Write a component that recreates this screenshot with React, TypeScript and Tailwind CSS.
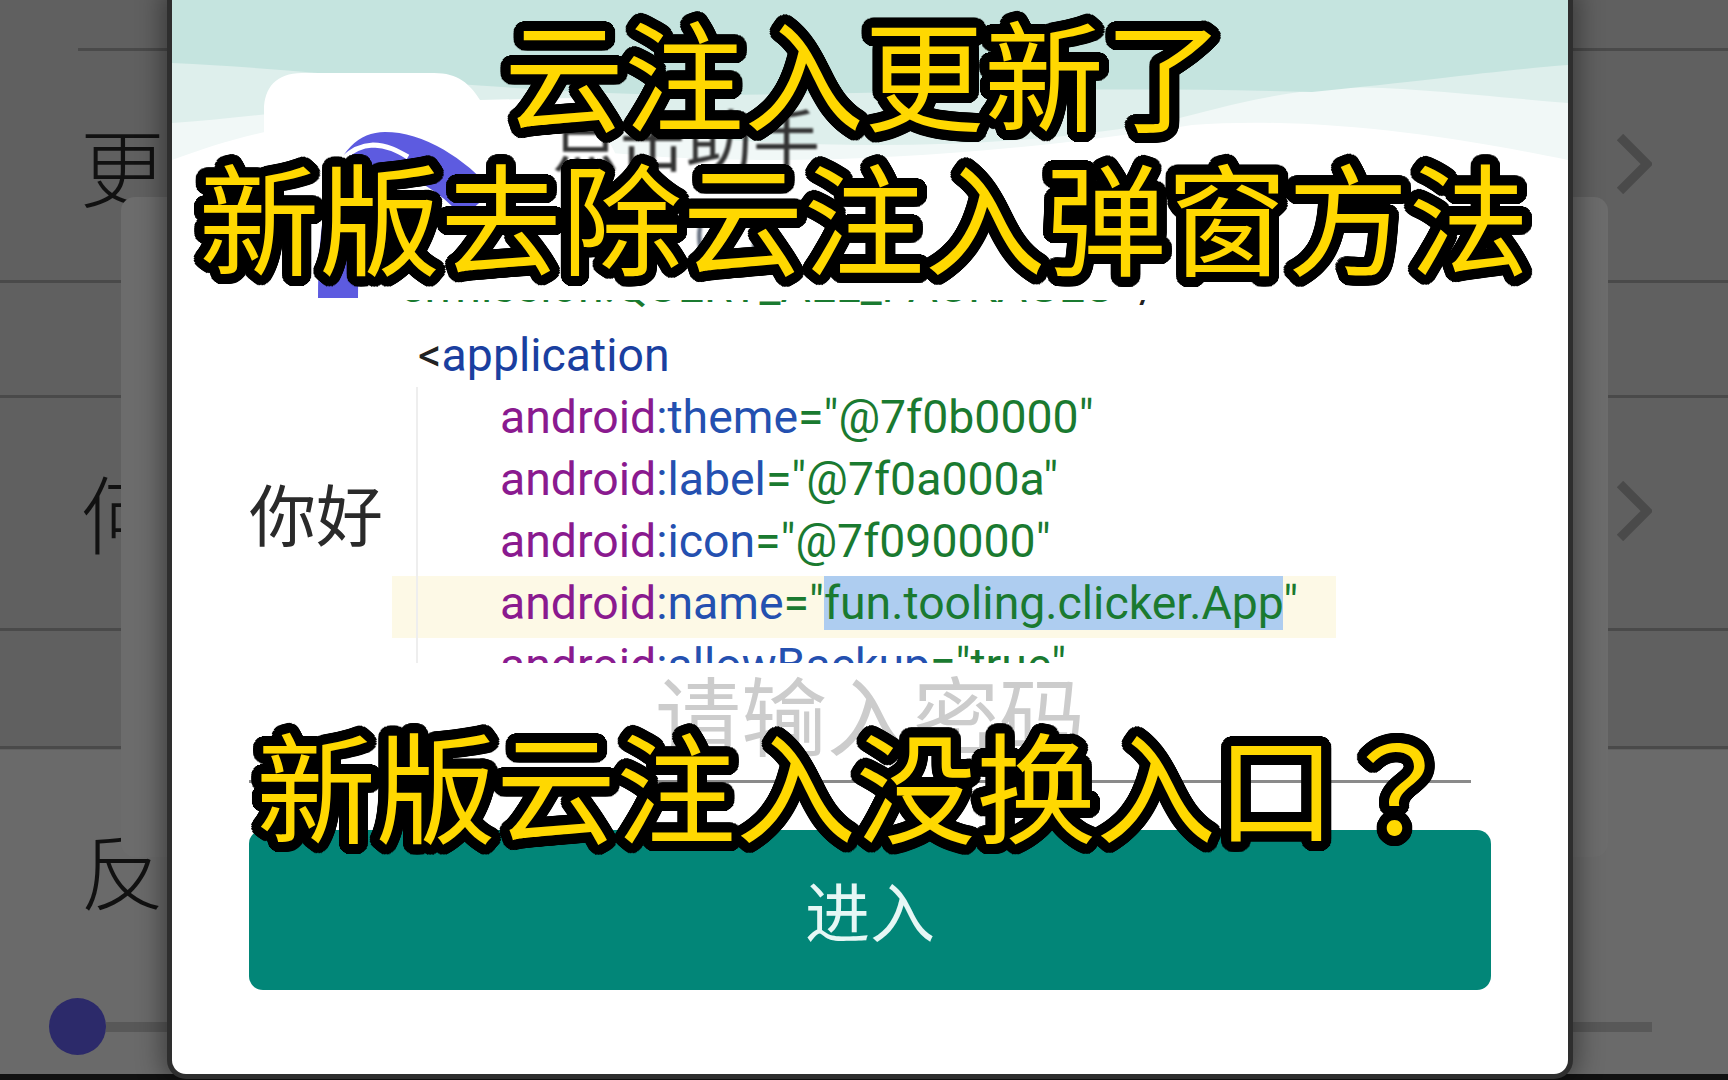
import React from 'react';

const ATTRS = [
  { name: 'theme', value: '@7f0b0000' },
  { name: 'label', value: '@7f0a000a' },
  { name: 'icon', value: '@7f090000' },
];

// round black outline for the big caption, two rings of offset copies
function ring(radius: number, steps: number) {
  return Array.from({ length: steps }, (_, i) => {
    const a = (i / steps) * Math.PI * 2;
    return `${(Math.cos(a) * radius).toFixed(1)}px ${(Math.sin(a) * radius).toFixed(1)}px 0 #000`;
  });
}
const OUTLINE = [...ring(10, 40), ...ring(5, 20)].join(',');

function Chevron() {
  return (
    <svg width="36" height="60" viewBox="0 0 36 60" fill="none" className="shrink-0">
      <path d="M4 3 L31 30 L4 57" stroke="#4a4a4a" strokeWidth="9" />
    </svg>
  );
}

function HeaderArt() {
  return (
    <svg width="1396" height="387" viewBox="0 0 1396 387" className="absolute left-0 top-0">
      <rect width="1396" height="387" fill="#ffffff" />
      <path d="M0 0H1396V160C1300 140 1150 115 1020 125C800 160 500 180 300 130C180 105 80 130 0 160Z" fill="#f1f8f7" />
      <path d="M0 0H1396V103C1300 95 1220 85 1160 88C1090 95 1040 110 1000 120C800 160 500 150 300 105C180 100 80 118 0 123Z" fill="#deefec" />
      <path d="M0 0H1396V65C1330 70 1260 80 1140 92C900 85 700 95 500 95C300 90 150 70 0 63Z" fill="#c5e4df" />
      <path d="M92 387V110C92 88 104 73 130 73H262C286 73 298 84 308 100L400 98C430 120 450 160 460 200V387Z" fill="#ffffff" />
      <path d="M166 298C166 215 178 152 213 152C245 152 280 175 306 204" stroke="#5d5be0" strokeWidth="40" fill="none" />
      <path d="M151 193C160 165 178 146 201 145C215 145 226 151 236 157" stroke="#ffffff" strokeWidth="5" fill="none" />
    </svg>
  );
}

function CodeLine({ children, active }: { children: React.ReactNode; active?: boolean }) {
  return (
    <div className={`flex h-[62px] items-center pb-[8px] pl-[108px] ${active ? 'bg-[#fdf9e6]' : ''}`}>
      <span className="whitespace-pre">{children}</span>
    </div>
  );
}

function CodePaste() {
  return (
    <div className="absolute left-[392px] top-[300px] h-[363px] w-[944px] overflow-hidden bg-white font-['Roboto',sans-serif] text-[46.4px] leading-[62px] text-[#1a7a30]">
      <div className="-mt-[34px] flex h-[62px] items-center pb-[22px] pl-[8px]">
        <span className="whitespace-pre">
          ermission.QUERY_ALL_PACKAGES" <span className="text-[#222222]">/&gt;</span>
        </span>
      </div>
      <div className="flex h-[62px] items-center pb-[8px] pl-[26px] text-[#222222]">
        &lt;<span className="text-[#1a3fa0]">application</span>
      </div>
      <div className="absolute bottom-0 left-[24px] top-[87px] w-[2px] bg-[#eeeeee]" />
      {ATTRS.map((attr) => (
        <CodeLine key={attr.name}>
          <span className="text-[#8a1a8f]">android</span>
          <span className="text-[#2450b0]">:{attr.name}</span>="{attr.value}"
        </CodeLine>
      ))}
      <CodeLine active>
        <span className="text-[#8a1a8f]">android</span>
        <span className="text-[#2450b0]">:name</span>="
        <span className="bg-[#aecdf0]">fun.tooling.clicker.App</span>"
      </CodeLine>
      <CodeLine>
        <span className="text-[#8a1a8f]">android</span>
        <span className="text-[#2450b0]">:allowBackup</span>="true"
      </CodeLine>
    </div>
  );
}

function Dialog() {
  return (
    <div className="absolute left-[172px] top-0 flex h-[1074px] w-[1396px] flex-col rounded-b-[14px] bg-white font-['Noto_Sans_CJK_SC',sans-serif] shadow-[0_0_0_5px_#2e2e2e,0_0_26px_10px_rgba(0,0,0,0.4)]">
      <div className="relative h-[387px] border-b-2 border-[#e6e6e6]">
        <HeaderArt />
        <div className="absolute left-[380px] top-[92px] text-[67px] leading-[90px] text-[#333333] blur-[1px]">点击助手</div>
        <div className="absolute left-[520px] top-[190px] text-[56px] leading-[80px] text-[#667080] blur-[1px]">(V)</div>
      </div>
      <div className="px-[77px]">
        <div className="mt-[80px] text-[67px] leading-[90px] text-[#2a2a2a]">你好</div>
        <div className="mr-[20px] mt-[106px] border-b-[3px] border-[#8a8a8a] pb-[17px] pl-[20px] text-center text-[86px] leading-[100px] text-[#cccccc]">
          请输入密码
        </div>
        <button className="mt-[47px] flex h-[160px] w-full items-center justify-center rounded-[14px] bg-[#028678] text-[65px] text-[#e6f7f5]">
          进入
        </button>
      </div>
    </div>
  );
}

function BackgroundList() {
  const row = 'flex items-center justify-between border-b-[3px] border-[#4a4a4a] pb-[4px] pl-[80px] pr-[76px] text-[85px] font-light text-[#111111]';
  return (
    <div className="flex h-full flex-col font-['Noto_Sans_CJK_SC',sans-serif]">
      <div className="ml-[78px] h-[51px] border-b-[3px] border-[#4a4a4a]" />
      <div className={`h-[232px] ${row}`}>
        <span>更</span>
        <Chevron />
      </div>
      <div className="h-[115px] border-b-[3px] border-[#4a4a4a]" />
      <div className={`h-[233px] ${row}`}>
        <span>何</span>
        <Chevron />
      </div>
      <div className="h-[118px] border-b-[3px] border-[#4a4a4a]" />
      <div className="flex h-[249px] items-center pb-[14px] pl-[80px] text-[85px] font-light text-[#111111]">反</div>
      <div className="flex items-center pl-[49px]">
        <div className="h-[57px] w-[57px] shrink-0 rounded-full bg-[#2c2a6a]" />
        <div className="h-[10px] w-[1546px] bg-[#585858]" />
      </div>
    </div>
  );
}

function Title({ children, className }: { children: React.ReactNode; className?: string }) {
  return (
    <div className={`whitespace-nowrap font-normal text-[#ffd800] ${className}`} style={{ textShadow: OUTLINE }}>
      {children}
    </div>
  );
}

export default function App() {
  return (
    <div className="relative h-[1080px] w-[1728px] overflow-hidden bg-[linear-gradient(#606060_750px,#6a6a6a_750px)]">
      <BackgroundList />
      <div className="absolute left-[121px] top-[197px] h-[660px] w-[1487px] rounded-[14px] bg-[#6c6c6c]" />
      <div className="absolute inset-x-0 bottom-0 h-[6px] bg-[#111111]" />
      <Dialog />
      <CodePaste />
      <div className="pointer-events-none absolute inset-0 flex flex-col items-center font-['Noto_Sans_CJK_SC',sans-serif]">
        <Title className="mt-px h-[140px] text-[120px] leading-[140px]">云注入更新了</Title>
        <Title className="mt-[3px] h-[140px] text-[121px] leading-[140px]">新版去除云注入弹窗方法</Title>
        <Title className="mr-[16px] mt-[429px] h-[140px] text-[120px] leading-[140px]">
          新版云注入没换入口<span className="font-['Noto_Sans_CJK_TC',sans-serif]">？</span>
        </Title>
      </div>
    </div>
  );
}
